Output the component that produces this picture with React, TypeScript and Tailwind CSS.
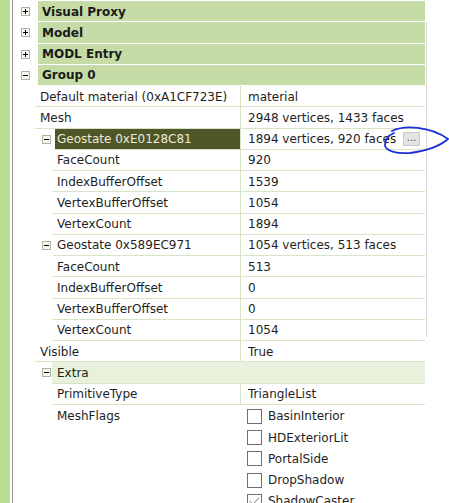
import { Check } from "lucide-react";

// ── Tree +/- box ──────────────────────────────────────────
const Toggle = ({ open }: { open: boolean }) => (
  <div className="w-[9px] h-[9px] border border-[#a9b5a0] bg-[#f7f7f4] flex items-center justify-center relative">
    <div className="absolute w-[5px] h-px bg-black" />
    {!open && <div className="absolute w-px h-[5px] bg-black" />}
  </div>
);

const CatRow = ({ label, open }: { label: string; open: boolean }) => (
  <div className="flex shrink-0 h-[21.25px] items-center">
    <div className="w-[25px] flex pl-[8px]">
      <Toggle open={open} />
    </div>
    <div className="w-[387px] h-full bg-[#c6dca6] border-b border-white flex items-center pl-[4px] pt-px font-bold text-[#1a1a1a]">
      {label}
    </div>
  </div>
);

type PropProps = {
  level: 1 | 2 | 3;
  name: string;
  value?: string;
  selected?: boolean;
  button?: boolean;
};

const PropRow = ({ level, name, value, selected, button }: PropProps) => {
  const indent = level === 1 ? "w-[22px]" : level === 2 ? "w-[40px] pl-[29px]" : "w-[39px]";
  const nameW = level === 1 ? "w-[205px] pl-[3px]" : level === 2 ? "w-[187px] pl-[2px]" : "w-[188px] pl-[3px]";
  return (
    <div className="flex shrink-0 h-[21.25px]">
      <div className={`${indent} flex items-center`}>
        {level === 2 && <Toggle open />}
      </div>
      <div className="flex-1 flex border-b border-[#d7e5c4]">
        <div className={`${nameW} flex items-center`}>
          <div className={`h-full w-full flex items-center pl-[2px] pt-px ${selected ? "bg-[#4f5628] text-[#ecebd8]" : ""}`}>
            {name}
          </div>
        </div>
        <div className="flex-1 border-l border-[#d7e5c4] pl-[7px] pt-px flex items-center justify-between pr-[5px]">
          <span>{value}</span>
          {button && (
            <div className="w-[17px] h-[14px] bg-[#e4e4e4] border border-[#c8c8c8] flex items-center justify-center text-[10px] leading-none text-[#444] pb-[3px]">
              ...
            </div>
          )}
        </div>
      </div>
    </div>
  );
};

const FLAGS = [
  { label: "BasinInterior", on: false },
  { label: "HDExteriorLit", on: false },
  { label: "PortalSide", on: false },
  { label: "DropShadow", on: false },
  { label: "ShadowCaster", on: true },
];

export default function App() {
  return (
    <div
      className="w-[449px] h-[503px] overflow-hidden bg-white flex text-[12px] text-[#1e1e1e] relative"
      style={{ fontFamily: '"DejaVu Sans", sans-serif' }}
    >
      <div className="w-[10px] shrink-0 bg-[#b9dd92]" />
      <div className="w-[2px] shrink-0" />
      <div className="w-px shrink-0 bg-[#9a9a9a]" />

      <div className="flex flex-col relative mt-px">
        <CatRow label="Visual Proxy" open={false} />
        <CatRow label="Model" open={false} />
        <CatRow label="MODL Entry" open={false} />
        <CatRow label="Group 0" open />

        <PropRow level={1} name="Default material (0xA1CF723E)" value="material" />
        <PropRow level={1} name="Mesh" value="2948 vertices, 1433 faces" />
        <PropRow level={2} name="Geostate 0xE0128C81" value="1894 vertices, 920 faces" selected button />
        <PropRow level={3} name="FaceCount" value="920" />
        <PropRow level={3} name="IndexBufferOffset" value="1539" />
        <PropRow level={3} name="VertexBufferOffset" value="1054" />
        <PropRow level={3} name="VertexCount" value="1894" />
        <PropRow level={2} name="Geostate 0x589EC971" value="1054 vertices, 513 faces" />
        <PropRow level={3} name="FaceCount" value="513" />
        <PropRow level={3} name="IndexBufferOffset" value="0" />
        <PropRow level={3} name="VertexBufferOffset" value="0" />
        <PropRow level={3} name="VertexCount" value="1054" />
        <PropRow level={1} name="Visible" value="True" />

        {/* Extra category */}
        <div className="flex shrink-0 h-[21.25px]">
          <div className="w-[39px] pl-[29px] flex items-center">
            <Toggle open />
          </div>
          <div className="w-[373px] bg-[#e7f1db] border-b border-[#d7e5c4] flex items-center pl-[5px] pt-px">Extra</div>
        </div>
        <PropRow level={3} name="PrimitiveType" value="TriangleList" />

        <div className="flex shrink-0">
          <div className="w-[39px]" />
          <div className="w-[188px] h-[21.25px] pl-[5px] pt-px flex items-center">MeshFlags</div>
          <div className="flex flex-col pl-[7px] pt-[1px]">
            {FLAGS.map((f) => (
              <div key={f.label} className="flex items-center h-[21.25px] gap-[6px]">
                <div className="w-[15px] h-[15px] border border-[#707070] bg-white flex items-center justify-center">
                  {f.on && <Check size={13} strokeWidth={1.5} className="text-[#555]" />}
                </div>
                <span>{f.label}</span>
              </div>
            ))}
          </div>
        </div>

        <div className="absolute left-[413px] top-[21px] w-px h-[315px] bg-[#d9d9d9]" />
      </div>

      {/* hand-drawn marker */}
      <svg className="absolute left-0 top-0 pointer-events-none" width="449" height="503">
        <path
          d="M392 131 C 404 125, 430 126, 448 139 C 440 146, 425 151, 410 153 C 397 154, 385 151, 385 145 C 385 140, 387 136, 394 133"
          fill="none"
          stroke="#1c2fd6"
          strokeWidth="1.8"
          strokeLinecap="round"
        />
      </svg>
    </div>
  );
}
